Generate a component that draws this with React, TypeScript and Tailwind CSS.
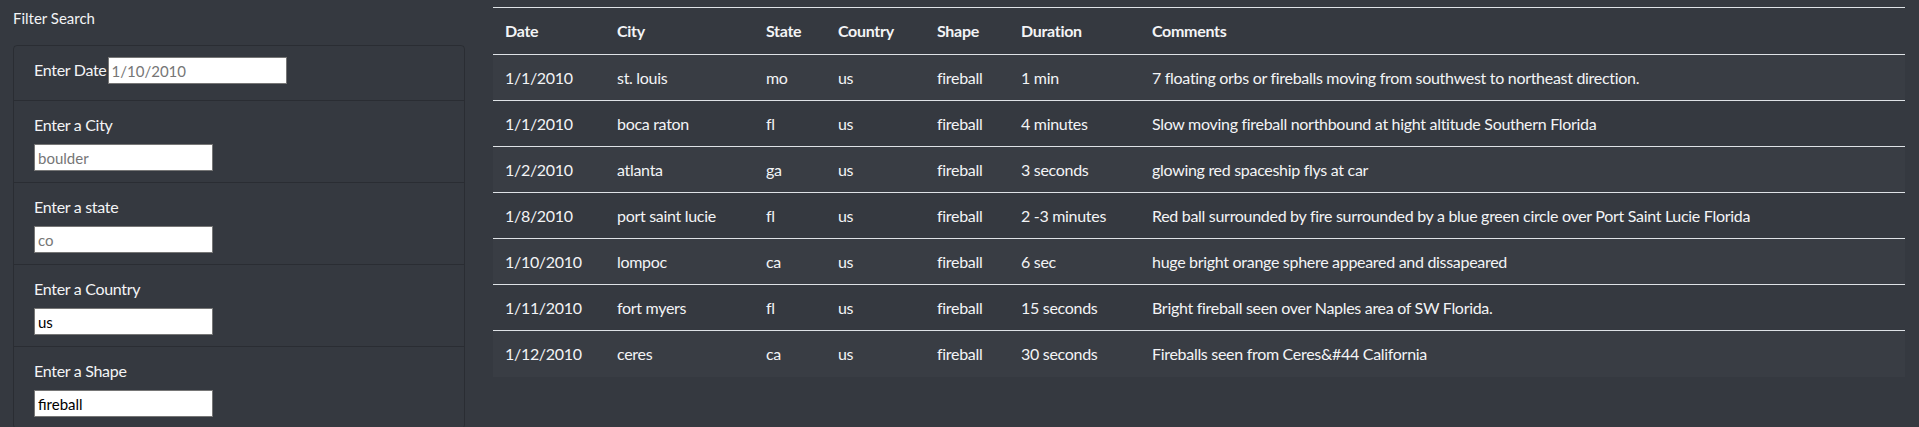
const sightings = [
  { date: "1/1/2010", city: "st. louis", state: "mo", country: "us", shape: "fireball", duration: "1 min", comments: "7 floating orbs or fireballs moving from southwest to northeast direction." },
  { date: "1/1/2010", city: "boca raton", state: "fl", country: "us", shape: "fireball", duration: "4 minutes", comments: "Slow moving fireball northbound at hight altitude Southern Florida" },
  { date: "1/2/2010", city: "atlanta", state: "ga", country: "us", shape: "fireball", duration: "3 seconds", comments: "glowing red spaceship flys at car" },
  { date: "1/8/2010", city: "port saint lucie", state: "fl", country: "us", shape: "fireball", duration: "2 -3 minutes", comments: "Red ball surrounded by fire surrounded by a blue green circle over Port Saint Lucie Florida" },
  { date: "1/10/2010", city: "lompoc", state: "ca", country: "us", shape: "fireball", duration: "6 sec", comments: "huge bright orange sphere appeared and dissapeared" },
  { date: "1/11/2010", city: "fort myers", state: "fl", country: "us", shape: "fireball", duration: "15 seconds", comments: "Bright fireball seen over Naples area of SW Florida." },
  { date: "1/12/2010", city: "ceres", state: "ca", country: "us", shape: "fireball", duration: "30 seconds", comments: "Fireballs seen from Ceres&#44 California" },
];

const filters = [
  { label: "Enter a City", placeholder: "boulder", value: "" },
  { label: "Enter a state", placeholder: "co", value: "" },
  { label: "Enter a Country", placeholder: "", value: "us" },
  { label: "Enter a Shape", placeholder: "", value: "fireball" },
];

const inputClass =
  "block w-[179px] h-[27px] bg-white border border-[#767676] px-[3px] text-[15px] tracking-normal text-black placeholder:text-[#767676] outline-none";

export default function App() {
  return (
    <div className="min-h-screen bg-[#353940] font-['Lato',sans-serif] text-[16px] tracking-[-0.3px] text-[#f3f4f6] flex pl-[13px] pr-[14px] gap-[28px]">
      {/* Filters */}
      <aside className="w-[452px] shrink-0">
        <h5 className="h-[45px] pt-[6px] text-[15px] leading-[24px] tracking-normal">Filter Search</h5>
        <ul className="border border-black/20 rounded-[4px]">
          <li className="h-[55px] px-[20px] pt-[11px] flex items-start border-b border-black/20">
            <label className="leading-[26px] mr-[1px]">Enter Date</label>
            <input className={inputClass + " h-[26px]"} placeholder="1/10/2010" />
          </li>
          {filters.map((f, i) => (
            <li key={i} className="px-[20px] pt-[12px] pb-[11px] border-b border-black/20 last:border-b-0">
              <label className="block leading-[24px] mb-[7px]">{f.label}</label>
              <input className={inputClass} placeholder={f.placeholder} defaultValue={f.value} />
            </li>
          ))}
        </ul>
      </aside>

      {/* Results */}
      <main className="flex-1 pt-[7px]">
        <table className="w-full table-fixed border-collapse text-left">
          <thead>
            <tr className="h-[47px] border-y border-[#dee2e6]">
              <th className="w-[112px] pl-[12px] font-bold">Date</th>
              <th className="w-[149px] pl-[12px] font-bold">City</th>
              <th className="w-[72px] pl-[12px] font-bold">State</th>
              <th className="w-[99px] pl-[12px] font-bold">Country</th>
              <th className="w-[84px] pl-[12px] font-bold">Shape</th>
              <th className="w-[131px] pl-[12px] font-bold">Duration</th>
              <th className="pl-[12px] font-bold">Comments</th>
            </tr>
          </thead>
          <tbody>
            {sightings.map((s, i) => (
              <tr key={i} className={`h-[46px] border-t border-[#dee2e6] first:border-t-0 ${i % 2 === 0 ? "bg-white/[0.025]" : ""}`}>
                <td className="pl-[12px]">{s.date}</td>
                <td className="pl-[12px]">{s.city}</td>
                <td className="pl-[12px]">{s.state}</td>
                <td className="pl-[12px]">{s.country}</td>
                <td className="pl-[12px]">{s.shape}</td>
                <td className="pl-[12px]">{s.duration}</td>
                <td className="pl-[12px]">{s.comments}</td>
              </tr>
            ))}
          </tbody>
        </table>
      </main>
    </div>
  );
}
